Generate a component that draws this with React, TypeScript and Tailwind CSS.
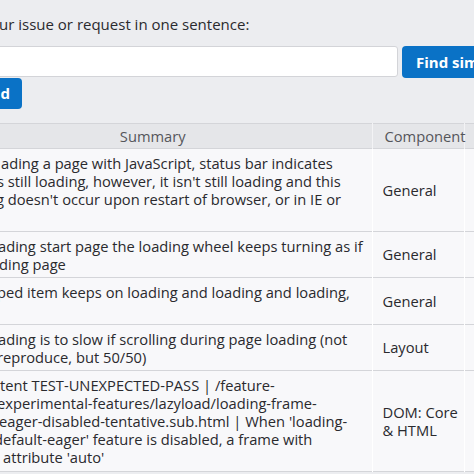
import React from "react";

type Row = {
  lines: { text: string; shift: number }[];
  component: string[];
};

const rows: Row[] = [
  {
    lines: [
      { text: "ading a page with JavaScript, status bar indicates", shift: 1 },
      { text: "s still loading, however, it isn't still loading and this", shift: -3 },
      { text: "g doesn't occur upon restart of browser, or in IE or", shift: -4 },
      { text: "", shift: 0 },
    ],
    component: ["General"],
  },
  {
    lines: [
      { text: "ading start page the loading wheel keeps turning as if", shift: -2 },
      { text: "ding page", shift: -1 },
    ],
    component: ["General"],
  },
  {
    lines: [
      { text: "ped item keeps on loading and loading and loading,", shift: -3 },
      { text: "", shift: 0 },
    ],
    component: ["General"],
  },
  {
    lines: [
      { text: "ading is to slow if scrolling during page loading (not", shift: -2 },
      { text: "reproduce, but 50/50)", shift: -3 },
    ],
    component: ["Layout"],
  },
  {
    lines: [
      { text: "tent TEST-UNEXPECTED-PASS | /feature-", shift: 0 },
      { text: "experimental-features/lazyload/loading-frame-", shift: -3 },
      { text: "eager-disabled-tentative.sub.html | When 'loading-", shift: -1 },
      { text: "default-eager' feature is disabled, a frame with", shift: -6 },
      { text: "attribute 'auto'", shift: 3 },
    ],
    component: ["DOM: Core", "& HTML"],
  },
];

export default function App() {
  return (
    <div
      className="w-[474px] h-[474px] overflow-hidden bg-[#ecedf0] text-[#2a2a2e]"
      style={{ fontFamily: '"Open Sans", "Noto Sans", sans-serif' }}
    >
      {/* search form */}
      <div className="pt-[13px]">
        <div className="text-[15px] leading-[22px] -ml-[1px] whitespace-nowrap">
          ur issue or request in one sentence:
        </div>
        <div className="flex items-start mt-[11px] -ml-[40px] w-[700px]">
          <input
            className="w-[438px] h-[31px] bg-white border border-[#d3d4d8] rounded-[3px] outline-none"
            readOnly
          />
          <button className="ml-[4px] h-[32px] px-[14px] rounded-[4px] bg-[#0a72c6] text-white font-bold text-[15px] whitespace-nowrap">
            Find similar issues
          </button>
        </div>
        <div className="-ml-[40px]">
          <button className="h-[31px] w-[62px] rounded-[4px] bg-[#0a72c6] text-white font-bold text-[15px] text-right pr-[12px]">
            d
          </button>
        </div>
      </div>

      {/* results */}
      <table className="mt-[14px] -ml-[66px] border-collapse table-fixed w-[640px] text-[14.7px] leading-[18px]">
        <colgroup>
          <col className="w-[438px]" />
          <col className="w-[92px]" />
          <col className="w-[110px]" />
        </colgroup>
        <thead>
          <tr className="bg-[#e5e6e9] border-y border-[#d4d5d9] text-[#55565b]">
            <th className="font-normal h-[25px] text-center border-r border-[#f3f3f5]">Summary</th>
            <th className="font-normal text-left pl-[12px] border-r border-[#f3f3f5]">Component</th>
            <th className="font-normal text-left pl-[30px]">Status</th>
          </tr>
        </thead>
        <tbody className="bg-[#f8f8fa]">
          {rows.map((r, i) => (
            <tr key={i} className="border-b border-[#d4d5d9]">
              <td className="pt-[5px] pb-[4.5px] pl-[66px] align-middle border-r border-white">
                {r.lines.map((l, j) => (
                  <div key={j} className="whitespace-nowrap h-[18px]" style={{ marginLeft: l.shift }}>
                    {l.text}
                  </div>
                ))}
              </td>
              <td className="pl-[10px] align-middle border-r border-white">
                {r.component.map((c) => (
                  <div key={c}>{c}</div>
                ))}
              </td>
              <td className="pl-[30px] align-middle">NEW</td>
            </tr>
          ))}
        </tbody>
      </table>
    </div>
  );
}
